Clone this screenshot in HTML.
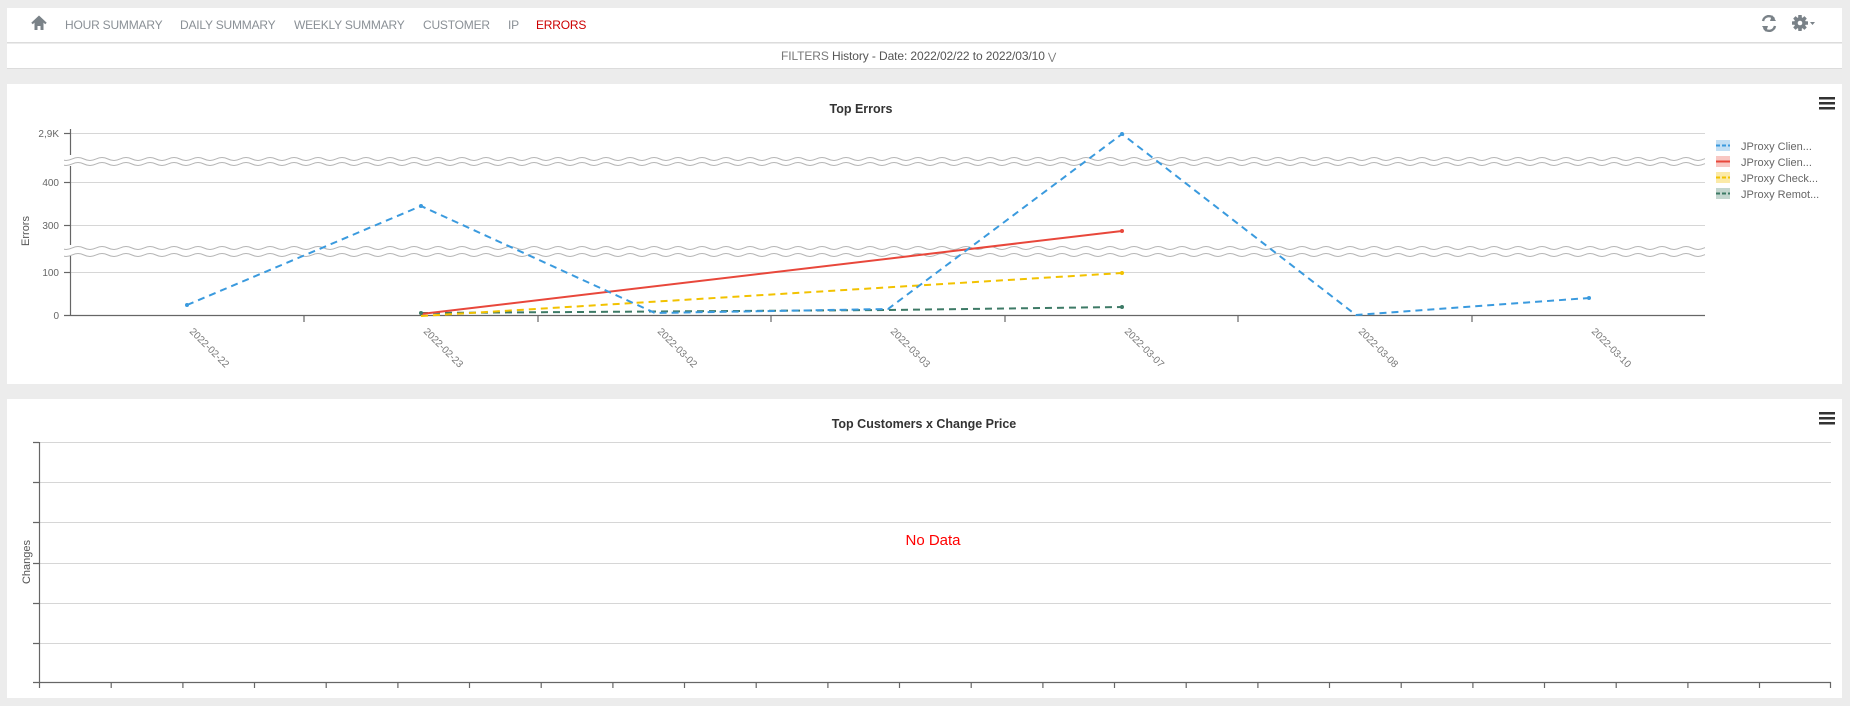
<!DOCTYPE html>
<html><head><meta charset="utf-8"><style>
html,body{margin:0;padding:0;background:#ececec;width:1850px;height:706px;overflow:hidden;font-family:"Liberation Sans",sans-serif}
.p{position:absolute;background:#fff;left:7px;width:1835px}
.nav{top:8px;height:34px;border-bottom:1px solid #dcdcdc}
.nav span{position:absolute;top:10px;font-size:12px;color:#8a9096;letter-spacing:-0.2px}
.flt{top:44px;height:24px;border-bottom:1px solid #dcdcdc}
svg{position:absolute;left:0;top:0}
</style></head><body>
<div class="p nav">
<span style="left:58px">HOUR SUMMARY</span>
<span style="left:173px">DAILY SUMMARY</span>
<span style="left:287px">WEEKLY SUMMARY</span>
<span style="left:416px">CUSTOMER</span>
<span style="left:501px">IP</span>
<span style="left:529px;color:#cc0000">ERRORS</span>
</div>
<div class="p flt"><div style="position:absolute;left:774px;top:5px;font-size:12px;color:#777;letter-spacing:-0.1px">FILTERS <span style="color:#555">History - Date: 2022/02/22 to 2022/03/10</span> <span style="font-size:10px">&#8897;</span></div></div>
<div class="p" style="top:84px;height:300px"></div>
<div class="p" style="top:399px;height:299px"></div>
<svg width="1850" height="706" viewBox="0 0 1850 706" font-family="Liberation Sans, sans-serif">
<defs>
<pattern id="wv" x="0" y="0" width="24" height="12" patternUnits="userSpaceOnUse">
<path d="M0 3 Q6 0 12 3 T24 3 M0 8 Q6 5 12 8 T24 8" fill="none" stroke="#b5b5b5" stroke-width="1"/>
</pattern>
</defs>
<!-- nav icons -->
<path d="M32 23.5 L39 17 L46 23.5" fill="none" stroke="#7a8288" stroke-width="2.2"/>
<path d="M34.5 22 L39 18 L43.5 22 V30 H40.5 V26 H37.5 V30 H34.5Z" fill="#7a8288"/>
<g fill="none" stroke="#7a8288" stroke-width="2.4">
<path d="M1763 21 A6 6 0 0 1 1774 19"/><path d="M1775 26 A6 6 0 0 1 1764 28"/>
</g>
<path d="M1772 15 L1776 21 L1770 21Z M1766 32 L1762 26 L1768 26Z" fill="#7a8288"/>
<g transform="translate(1800,23)" fill="#7a8288">
<rect x="-1.8" y="-8" width="3.6" height="16" rx="0.6"/>
<rect x="-1.8" y="-8" width="3.6" height="16" rx="0.6" transform="rotate(45)"/>
<rect x="-1.8" y="-8" width="3.6" height="16" rx="0.6" transform="rotate(90)"/>
<rect x="-1.8" y="-8" width="3.6" height="16" rx="0.6" transform="rotate(135)"/>
<circle r="5.8"/><circle r="2.3" fill="#fff"/>
</g>
<path d="M1810 22 h5 l-2.5 3z" fill="#7a8288"/>
<!-- chart 1 -->
<text x="861" y="113" text-anchor="middle" font-size="12.5" font-weight="bold" fill="#333">Top Errors</text>
<g fill="#333"><rect x="1819" y="97" width="16" height="2.5"/><rect x="1819" y="102" width="16" height="2.5"/><rect x="1819" y="107" width="16" height="2.5"/></g>
<g stroke="#d6d6d6" stroke-width="1"><line x1="70" y1="133.5" x2="1705" y2="133.5"/><line x1="70" y1="182.5" x2="1705" y2="182.5"/><line x1="70" y1="225.5" x2="1705" y2="225.5"/><line x1="70" y1="272.5" x2="1705" y2="272.5"/></g>
<rect x="64" y="155" width="1641" height="10" fill="#fff"/><rect x="64" y="155" width="1641" height="12" fill="url(#wv)"/>
<rect x="64" y="245" width="1641" height="10" fill="#fff"/><rect x="64" y="245" width="1641" height="12" fill="url(#wv)"/>
<g stroke="#666" stroke-width="1.2"><line x1="70.5" y1="129" x2="70.5" y2="155"/><line x1="70.5" y1="166" x2="70.5" y2="245"/><line x1="70.5" y1="256" x2="70.5" y2="316"/>
<line x1="64" y1="315.5" x2="1705" y2="315.5"/>
<line x1="64" y1="133.5" x2="70" y2="133.5"/><line x1="64" y1="182.5" x2="70" y2="182.5"/><line x1="64" y1="225.5" x2="70" y2="225.5"/><line x1="64" y1="272.5" x2="70" y2="272.5"/>
<line x1="304" y1="315" x2="304" y2="322"/><line x1="538" y1="315" x2="538" y2="322"/><line x1="771" y1="315" x2="771" y2="322"/><line x1="1005" y1="315" x2="1005" y2="322"/><line x1="1238" y1="315" x2="1238" y2="322"/><line x1="1472" y1="315" x2="1472" y2="322"/></g>
<g font-size="10" fill="#666" text-anchor="end"><text x="59" y="137">2,9K</text><text x="59" y="186">400</text><text x="59" y="229">300</text><text x="59" y="276">100</text><text x="59" y="319">0</text></g>
<text transform="translate(29,231) rotate(-90)" text-anchor="middle" font-size="11" fill="#555">Errors</text>
<g font-size="10" fill="#777">
<text transform="translate(189,332) rotate(45)">2022-02-22</text>
<text transform="translate(423,332) rotate(45)">2022-02-23</text>
<text transform="translate(657,332) rotate(45)">2022-03-02</text>
<text transform="translate(890,332) rotate(45)">2022-03-03</text>
<text transform="translate(1124,332) rotate(45)">2022-03-07</text>
<text transform="translate(1358,332) rotate(45)">2022-03-08</text>
<text transform="translate(1591,332) rotate(45)">2022-03-10</text>
</g>
<polyline points="421,313 888,310 1122,307" fill="none" stroke="#3d7a66" stroke-width="2" stroke-dasharray="7 5"/>
<polyline points="421,316 1122,273" fill="none" stroke="#f2c200" stroke-width="2" stroke-dasharray="7 5"/>
<polyline points="421,314 1122,231" fill="none" stroke="#e8473b" stroke-width="2"/>
<polyline points="187,305 421,206 655,313 888,309 1122,134 1356,315 1589,298" fill="none" stroke="#3a9ade" stroke-width="2" stroke-dasharray="7 5"/>
<g><circle cx="187" cy="305" r="2" fill="#3a9ade"/><circle cx="421" cy="206" r="2" fill="#3a9ade"/><circle cx="1122" cy="134" r="2" fill="#3a9ade"/><circle cx="1589" cy="298" r="2" fill="#3a9ade"/><circle cx="1122" cy="231" r="2" fill="#e8473b"/><circle cx="1122" cy="273" r="2" fill="#f2c200"/><circle cx="1122" cy="307" r="2" fill="#3d7a66"/><circle cx="421" cy="313" r="2" fill="#3d7a66"/></g>
<g font-size="11" fill="#666">
<rect x="1716" y="140" width="14" height="11" fill="#c3dff4"/><line x1="1716" y1="145.5" x2="1730" y2="145.5" stroke="#3a9ade" stroke-width="2" stroke-dasharray="4 2"/><text x="1741" y="150">JProxy Clien...</text>
<rect x="1716" y="156" width="14" height="11" fill="#f8c7c3"/><line x1="1716" y1="161.5" x2="1730" y2="161.5" stroke="#e8473b" stroke-width="2"/><text x="1741" y="166">JProxy Clien...</text>
<rect x="1716" y="172" width="14" height="11" fill="#fbeaa8"/><line x1="1716" y1="177.5" x2="1730" y2="177.5" stroke="#f2c200" stroke-width="2" stroke-dasharray="4 2"/><text x="1741" y="182">JProxy Check...</text>
<rect x="1716" y="188" width="14" height="11" fill="#c3d6cf"/><line x1="1716" y1="193.5" x2="1730" y2="193.5" stroke="#3d7a66" stroke-width="2" stroke-dasharray="4 2"/><text x="1741" y="198">JProxy Remot...</text>
</g>
<!-- chart 2 -->
<text x="924" y="428" text-anchor="middle" font-size="12.5" font-weight="bold" fill="#333">Top Customers x Change Price</text>
<g fill="#333"><rect x="1819" y="412" width="16" height="2.5"/><rect x="1819" y="417" width="16" height="2.5"/><rect x="1819" y="422" width="16" height="2.5"/></g>
<g stroke="#d6d6d6"><line x1="40" y1="442.5" x2="1831" y2="442.5"/><line x1="40" y1="482.5" x2="1831" y2="482.5"/><line x1="40" y1="522.5" x2="1831" y2="522.5"/><line x1="40" y1="563.5" x2="1831" y2="563.5"/><line x1="40" y1="603.5" x2="1831" y2="603.5"/><line x1="40" y1="643.5" x2="1831" y2="643.5"/></g>
<g stroke="#666" stroke-width="1.2"><line x1="39.5" y1="442" x2="39.5" y2="688"/><line x1="33" y1="682.5" x2="1831" y2="682.5"/>
<path d="M33 442.5h6M33 482.5h6M33 522.5h6M33 563.5h6M33 603.5h6M33 643.5h6"/>
<path d="M111.2 682v6M182.9 682v6M254.5 682v6M326.2 682v6M397.9 682v6M469.5 682v6M541.2 682v6M612.9 682v6M684.5 682v6M756.2 682v6M827.9 682v6M899.5 682v6M971.2 682v6M1042.9 682v6M1114.5 682v6M1186.2 682v6M1257.9 682v6M1329.5 682v6M1401.2 682v6M1472.9 682v6M1544.5 682v6M1616.2 682v6M1687.9 682v6M1759.5 682v6M1830.5 682v6"/></g>
<text transform="translate(30,562) rotate(-90)" text-anchor="middle" font-size="11" fill="#555">Changes</text>
<text x="933" y="545" text-anchor="middle" font-size="15" fill="#ff0000">No Data</text>
</svg>
</body></html>
